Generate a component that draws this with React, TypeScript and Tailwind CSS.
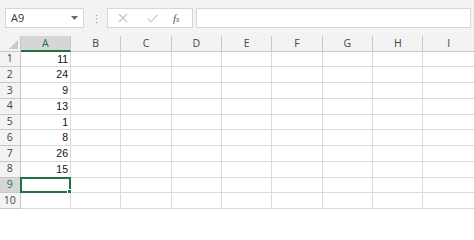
import React from 'react';

const cols = ['A', 'B', 'C', 'D', 'E', 'F', 'G', 'H'];
const values: Record<number, string> = { 1: '11', 2: '24', 3: '9', 4: '13', 5: '1', 6: '8', 7: '26', 8: '15' };
const rows = [1, 2, 3, 4, 5, 6, 7, 8, 9, 10];

const headFont = { fontFamily: '"Open Sans", "Noto Sans", sans-serif' };
const cellFont = { fontFamily: '"Liberation Sans", Arial, sans-serif' };

const FormulaBar = () => (
  <div className="flex h-[36px] items-start bg-[#f3f3f3] pt-[8px]">
    {/* Name box */}
    <div className="ml-[5px] flex h-[20px] w-[79px] items-center justify-between border border-[#d6d6d6] bg-white pl-[5px] pr-[5px]">
      <span className="text-[11px] text-[#333]" style={headFont}>A9</span>
      <svg width="7" height="4" viewBox="0 0 7 4">
        <path d="M0 0 L7 0 L3.5 4 Z" fill="#6a6a6a" />
      </svg>
    </div>
    {/* grip */}
    <svg className="ml-[11px] mt-[6px]" width="3" height="10" viewBox="0 0 3 10">
      <circle cx="1.5" cy="1.5" r="0.8" fill="#a8a8a8" />
      <circle cx="1.5" cy="5" r="0.8" fill="#a8a8a8" />
      <circle cx="1.5" cy="8.5" r="0.8" fill="#a8a8a8" />
    </svg>
    {/* cancel / enter / fx */}
    <div className="ml-[9px] flex h-[20px] w-[86px] items-center border border-[#d6d6d6] bg-white">
      <svg className="ml-[10px]" width="10" height="10" viewBox="0 0 10 10">
        <path d="M1 1 L9 9 M9 1 L1 9" stroke="#c4c4c4" strokeWidth="1.1" />
      </svg>
      <svg className="ml-[19px]" width="11" height="9" viewBox="0 0 11 9">
        <path d="M0.8 4.6 L4 7.8 L10.4 0.8" stroke="#c4c4c4" strokeWidth="1.1" fill="none" />
      </svg>
      <span className="ml-[15px] text-[11px] italic leading-none text-[#555]" style={{ fontFamily: '"Liberation Serif", serif' }}>
        f<span className="text-[8px]">x</span>
      </span>
    </div>
    {/* formula input */}
    <div className="ml-[3px] h-[20px] w-[275px] border border-[#d6d6d6] bg-white" />
  </div>
);

const HeaderRow = () => (
  <div className="flex h-[15.74px]">
    <div className="relative h-full w-[20.7px] shrink-0 border-b border-r border-[#c8c8c8] bg-[#f3f3f3]">
      <svg className="absolute bottom-[2px] right-[2px]" width="9" height="9" viewBox="0 0 9 9">
        <path d="M9 0 L9 9 L0 9 Z" fill="#c9c9c9" />
      </svg>
    </div>
    {cols.map((c) => (
      <div
        key={c}
        className={
          c === 'A'
            ? 'flex h-full w-[50.35px] shrink-0 items-center justify-center border-b-2 border-r border-b-[#217346] border-r-[#c8c8c8] bg-[#d6d6d6] pt-[1px] text-[10.5px] text-[#217346]'
            : 'flex h-full w-[50.35px] shrink-0 items-center justify-center border-b border-r border-[#c8c8c8] bg-[#f3f3f3] text-[10.5px] text-[#444]'
        }
        style={headFont}
      >
        {c}
      </div>
    ))}
    <div className="flex h-full flex-1 items-center justify-center border-b border-[#c8c8c8] bg-[#f3f3f3] text-[10.5px] text-[#444]" style={headFont}>
      I
    </div>
  </div>
);

const Row = ({ n }: { n: number }) => {
  const selected = n === 9;
  return (
    <div className="flex h-[15.74px]">
      <div
        className={
          selected
            ? 'flex h-full w-[20.7px] shrink-0 items-center justify-center border-b border-r border-[#c8c8c8] bg-[#d6d6d6] text-[10.5px] text-[#217346]'
            : 'flex h-full w-[20.7px] shrink-0 items-center justify-center border-b border-r border-[#c8c8c8] bg-[#f3f3f3] text-[10.5px] text-[#444]'
        }
        style={headFont}
      >
        {n}
      </div>
      <div className="relative flex h-full w-[50.35px] shrink-0 items-center justify-end border-b border-r border-[#dadada] pr-[2px] pt-[1px] text-[10.5px] text-[#111]" style={cellFont}>
        {values[n] ?? ''}
        {selected && (
          <div className="absolute -left-[1px] -top-[1px] bottom-[-1px] right-[-1px] border-2 border-[#217346]">
            <div className="absolute -bottom-[3px] -right-[3px] h-[5px] w-[5px] border border-white bg-[#217346]" />
          </div>
        )}
      </div>
      {cols.slice(1).map((c) => (
        <div key={c} className="h-full w-[50.35px] shrink-0 border-b border-r border-[#dadada]" />
      ))}
      <div className="h-full flex-1 border-b border-[#dadada]" />
    </div>
  );
};

export default function App() {
  return (
    <div className="h-[209px] w-[474px] overflow-hidden bg-white">
      <FormulaBar />
      <HeaderRow />
      {rows.map((n) => (
        <Row key={n} n={n} />
      ))}
    </div>
  );
}
